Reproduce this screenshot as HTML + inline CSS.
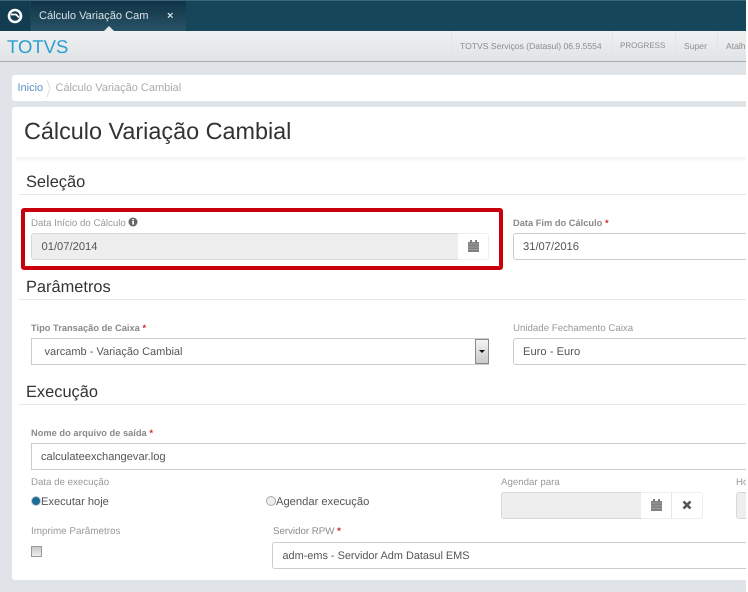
<!DOCTYPE html>
<html lang="pt"><head><meta charset="utf-8"><title>Cálculo Variação Cambial</title>
<style>
html,body{margin:0;padding:0}
body{width:748px;height:592px;overflow:hidden;position:relative;background:#e0e4e8;font-family:"Liberation Sans",Arial,sans-serif;color:#555;text-rendering:geometricPrecision}
#w{position:absolute;left:0;top:0;width:748px;height:592px;filter:blur(.3px)}
.a{position:absolute;white-space:nowrap}
.l{position:absolute;white-space:nowrap;font-size:9.7px;line-height:12px;color:#999;margin-top:1px}
.b{font-weight:bold;color:#8a8a8a;font-size:9.3px}
.r{color:#d9232e;font-weight:bold}
.i{position:absolute;box-sizing:border-box;background:#fff;border:1px solid #ccc;border-radius:3px;height:27px;font-size:11.2px;line-height:27px;color:#555;white-space:nowrap}
.d{background:#eee;border-color:#d8d8d8}
.h{position:absolute;white-space:nowrap;font-size:16.4px;line-height:20px;color:#333;margin-top:1px}
.s{position:absolute;left:19px;width:727px;height:1px;background:#e7e7e7}
.n{position:absolute;top:31px;height:30px;width:1px;background:#e2e4e6}
.t{position:absolute;top:40px;font-size:8.6px;line-height:12px;color:#8d8d8d;white-space:nowrap}
</style></head><body><div id="w">
<div class="a" style="left:0;top:0;width:748px;height:31px;background:#16465a;border-top:1px solid #3d6678;box-sizing:border-box"></div>
<div class="a" style="left:0;top:1px;width:30px;height:30px;background:#123c50"></div>
<svg class="a" style="left:6px;top:7px" width="18" height="18" viewBox="0 0 18 18"><circle cx="9" cy="9" r="6" fill="none" stroke="#fff" stroke-width="2.6"/><path d="M5 7.5h5l3 3" fill="none" stroke="#fff" stroke-width="1.7"/></svg>
<div class="a" style="left:31px;top:1px;width:155px;height:30px;background:linear-gradient(#0f3346,#2a5367)"></div>
<div class="a" style="left:39px;top:9px;font-size:11.1px;line-height:14px;color:#d8e0e4">Cálculo Variação Cam</div>
<div class="a" style="left:167px;top:9px;font-size:11px;line-height:14px;font-weight:bold;color:#d8e0e4">×</div>
<div class="a" style="left:104px;top:26px;width:0;height:0;border-left:5px solid transparent;border-right:5px solid transparent;border-bottom:5px solid #e8eaec"></div>

<div class="a" style="left:0;top:31px;width:748px;height:31px;box-sizing:border-box;background:linear-gradient(#eef0f1,#e1e4e6);border-bottom:1px solid #a9acae"></div>
<div class="a" style="left:7px;top:35px;font-size:18.5px;line-height:23px;color:#2a9fd0">TOTVS</div>
<div class="n" style="left:451px"></div><div class="n" style="left:612px"></div><div class="n" style="left:675px"></div><div class="n" style="left:717px"></div>
<div class="t" style="left:460px">TOTVS Serviços (Datasul) 06.9.5554</div>
<div class="t" style="left:620px;font-size:8px">PROGRESS</div>
<div class="t" style="left:684px">Super</div>
<div class="t" style="left:726px">Atalh</div>

<div class="a" style="left:12px;top:75px;width:734px;height:26px;background:#fff;border-radius:3px 0 0 3px"></div>
<div class="a" style="left:17.5px;top:82px;font-size:11px;line-height:13px;color:#5b8fc7">Inicio</div>
<svg class="a" style="left:46px;top:80px" width="6" height="17" viewBox="0 0 6 17"><path d="M1 0l3 8.5-3 8.500" fill="none" stroke="#ddd"/></svg>
<div class="a" style="left:55.5px;top:82px;font-size:11px;line-height:13px;color:#aaa">Cálculo Variação Cambial</div>

<div class="a" style="left:12px;top:107px;width:734px;height:473px;background:#fff;border-radius:3px 0 0 3px"></div>
<div class="a" style="left:16px;top:157px;width:730px;height:5px;background:linear-gradient(#f0f0f0,#fff)"></div>
<div class="a" style="left:24px;top:117px;font-size:23.4px;line-height:28px;color:#333">Cálculo Variação Cambial</div>

<div class="h" style="left:26px;top:171px">Seleção</div><div class="s" style="top:194px"></div>

<div class="a" style="left:21px;top:208px;width:482px;height:62px;box-sizing:border-box;border:4px solid #c8000c;border-radius:3px"></div>
<div class="l" style="left:31px;top:217px">Data Início do Cálculo</div>
<svg class="a" style="left:128px;top:217px" width="10" height="10" viewBox="0 0 10 10"><circle cx="5" cy="5" r="4.5" fill="#666"/><rect x="4.200" y="4" width="1.700" height="3.600" fill="#fff"/><rect x="4.200" y="2" width="1.700" height="1.300" fill="#fff"/></svg>
<div class="i d" style="left:31px;top:233px;width:428px;padding-left:9.5px;border-radius:3px 0 0 3px">01/07/2014</div>
<div class="i" style="left:458px;top:233px;width:31px;border-color:#eee;border-left:0;border-radius:0 3px 3px 0"></div>
<svg class="a" style="left:468px;top:240px" width="11" height="12" viewBox="0 0 11 12"><path d="M0 2h11v10H0z" fill="#808080"/><path d="M2 0h2v2H2zM7 0h2v2H7z" fill="#808080"/><path d="M0 4h11M0 7h11M0 9.5h11" stroke="#b8b8b8" stroke-width=".6"/></svg>
<div class="l b" style="left:513px;top:216px">Data Fim do Cálculo <span class="r">*</span></div>
<div class="i" style="left:513px;top:233px;width:240px;padding-left:9px">31/07/2016</div>

<div class="h" style="left:26px;top:276px">Parâmetros</div><div class="s" style="top:299px"></div>
<div class="l b" style="left:31px;top:321px">Tipo Transação de Caixa <span class="r">*</span></div>
<div class="i" style="left:31px;top:338px;width:458px;padding-left:12.5px;border-radius:0;font-size:11px">varcamb - Variação Cambial</div>
<div class="a" style="left:475px;top:339px;width:14px;height:25px;box-sizing:border-box;border:1px solid #8a8a8a;background:linear-gradient(#f4f4f4,#c9c9c9)"></div>
<div class="a" style="left:479px;top:350px;width:0;height:0;border-left:3px solid transparent;border-right:3px solid transparent;border-top:3px solid #111"></div>
<div class="l" style="left:513px;top:322px">Unidade Fechamento Caixa</div>
<div class="i" style="left:513px;top:338px;width:240px;padding-left:9px">Euro - Euro</div>

<div class="h" style="left:26px;top:381px">Execução</div><div class="s" style="top:404px"></div>
<div class="l b" style="left:31px;top:426px">Nome do arquivo de saída <span class="r">*</span></div>
<div class="i" style="left:31px;top:443px;width:722px;padding-left:9px;border-radius:0;font-size:11.1px">calculateexchangevar.log</div>

<div class="l" style="left:31px;top:476px">Data de execução</div>
<div class="a" style="left:31px;top:496px;width:10px;height:10px;box-sizing:border-box;border-radius:50%;background:#1b6d96;border:1.5px solid #b9c7d0"></div>
<div class="a" style="left:41px;top:495px;font-size:11.1px;line-height:14px;color:#555">Executar hoje</div>
<div class="a" style="left:266px;top:496px;width:10px;height:10px;box-sizing:border-box;border-radius:50%;background:#eee;border:1px solid #aaa"></div>
<div class="a" style="left:276px;top:495px;font-size:11.2px;line-height:14px;color:#555">Agendar execução</div>
<div class="l" style="left:501px;top:476px">Agendar para</div>
<div class="i d" style="left:501px;top:492px;width:141px;border-radius:3px 0 0 3px"></div>
<div class="i" style="left:641px;top:492px;width:62px;border-color:#eee;border-left:0;border-radius:0 3px 3px 0"></div>
<div class="a" style="left:671px;top:493px;width:1px;height:25px;background:#e6e6e6"></div>
<svg class="a" style="left:651px;top:499px" width="11" height="12" viewBox="0 0 11 12"><path d="M0 2h11v10H0z" fill="#808080"/><path d="M2 0h2v2H2zM7 0h2v2H7z" fill="#808080"/><path d="M0 4h11M0 7h11M0 9.5h11" stroke="#b8b8b8" stroke-width=".6"/></svg>
<svg class="a" style="left:682px;top:500px" width="10" height="10" viewBox="0 0 10 10"><path d="M1.500 1.500l7 7M8.500 1.500l-7 7" stroke="#555" stroke-width="2.600"/></svg>
<div class="l" style="left:736px;top:476px">Ho</div>
<div class="i d" style="left:736px;top:492px;width:20px"></div>

<div class="l" style="left:31px;top:525px;font-size:9.9px">Imprime Parâmetros</div>
<div class="a" style="left:31px;top:546px;width:11px;height:11px;box-sizing:border-box;border:1px solid #999;background:linear-gradient(#c8c8c8,#eee)"></div>
<div class="l" style="left:273px;top:525px;color:#8a8a8a">Servidor RPW <span class="r">*</span></div>
<div class="i" style="left:272px;top:542px;width:481px;padding-left:9.5px;font-size:10.9px">adm-ems - Servidor Adm Datasul EMS</div>
</div>
<div class="a" style="left:746px;top:0;width:2px;height:592px;background:#fff"></div>
</body></html>
